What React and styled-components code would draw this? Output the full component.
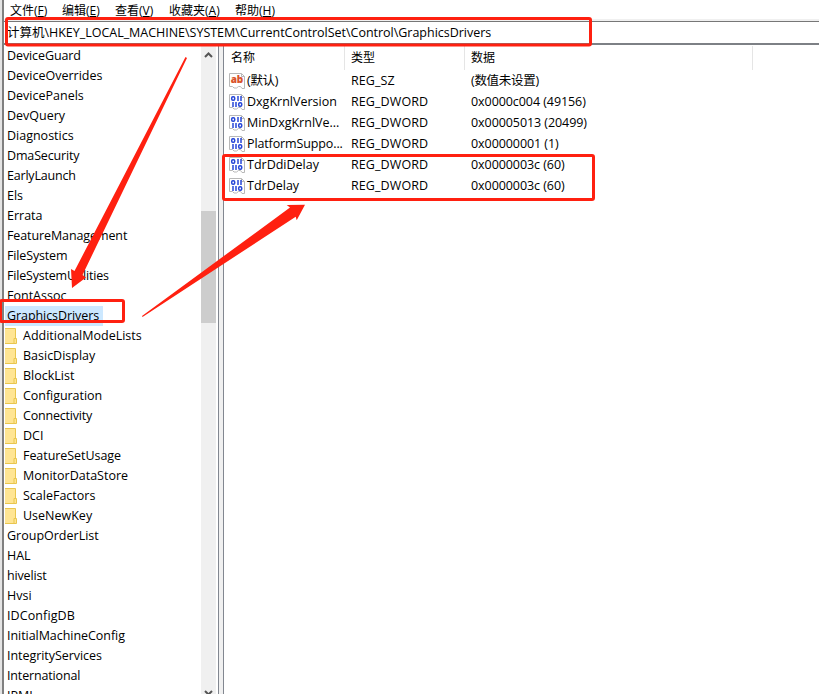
import React from "react";
import styled, { createGlobalStyle, css } from "styled-components";

const RED = "#ff2010";

const GlobalStyle = createGlobalStyle`
  * {
    box-sizing: border-box;
  }
  body {
    margin: 0;
    overflow: hidden;
    background: #fff;
    color: #000;
    font: 12.5px/20px "Open Sans", "Noto Sans CJK SC", sans-serif;
  }
`;

const Window = styled.div`
  position: relative;
  display: flex;
  width: 819px;
  height: 694px;
  overflow: hidden;
`;

const LeftEdge = styled.div`
  flex: none;
  width: 4px;
  background: #e4e4e4;
  border-right: 2px solid #808080;
`;

const Main = styled.div`
  flex: 1;
  min-width: 0;
  display: flex;
  flex-direction: column;
`;

const MenuBar = styled.nav`
  display: flex;
  height: 21px;
  padding-left: 6px;
  border-bottom: 2px solid #f0f0f0;
`;

const MenuItem = styled.span`
  flex: none;
  width: ${props => props.$width}px;
  font-size: 12px;
  line-height: 22px;
  white-space: nowrap;
`;

const AddressBar = styled.div`
  height: 24px;
  padding-left: 3px;
  border-top: 1px solid #777;
  border-bottom: 2px solid #7d8085;
  line-height: 22px;
  letter-spacing: -0.02px;
  white-space: nowrap;
`;

const Panes = styled.div`
  flex: 1;
  min-height: 0;
  display: flex;
`;

const TreePane = styled.div`
  flex: none;
  width: 197px;
  padding-top: 1px;
  overflow: hidden;
`;

const TreeRow = styled.div`
  display: flex;
  align-items: center;
  height: 20px;
  padding-left: ${props => (props.$child ? 1 : 0)}px;
`;

const TreeLabel = styled.span`
  height: 20px;
  padding: 0 4px 0 ${props => (props.$child ? 6 : 3)}px;
  line-height: 19px;
  letter-spacing: ${props => props.$spacing || 0}px;
  white-space: nowrap;
  ${props =>
    props.$selected &&
    css`
      margin-left: 1px;
      padding-left: 2px;
      background: #cce8ff;
    `}
`;

const ScrollTrack = styled.div`
  flex: none;
  width: 15px;
  height: 100%;
  display: flex;
  flex-direction: column;
  background: #f0f0f0;
`;

const ScrollArrow = styled.svg`
  flex: none;
  display: block;
  width: 15px;
  height: 17px;
  fill: none;
  stroke: #555;
  stroke-width: 2;
`;

const ScrollGap = styled.div`
  height: ${props => props.$height}px;
  ${props => props.$fill && "flex: 1;"}
`;

const ScrollThumb = styled.div`
  height: 112px;
  background: #cdcdcd;
`;

const Splitter = styled.div`
  flex: none;
  width: 6px;
  margin-left: 2px;
  background: #f0f0f0;
  border-left: 1px solid #828790;
  border-right: 1px solid #828790;
`;

const ValuePane = styled.div`
  flex: 1;
  padding-top: 1px;
`;

const COLUMNS = "121px 120px 288px";

const HeaderRow = styled.div`
  display: grid;
  grid-template-columns: ${COLUMNS};
  height: 24px;
`;

const HeaderCell = styled.div`
  padding-left: ${props => (props.$first ? 7 : 6)}px;
  border-right: 1px solid #e5e5e5;
  font-size: 12px;
  line-height: 23px;
`;

const ValueRow = styled.div`
  display: grid;
  grid-template-columns: ${COLUMNS};
  height: 21px;
  line-height: 21px;
  white-space: nowrap;
`;

const NameCell = styled.div`
  display: flex;
  align-items: center;
  gap: 2px;
  padding-left: 5px;
  letter-spacing: ${props => props.$spacing || 0}px;
`;

const Cell = styled.div`
  padding-left: 6px;
  letter-spacing: ${props => props.$spacing || 0}px;
`;

const Icon = styled.svg`
  flex: none;
  display: block;
`;

const Marks = styled.svg`
  position: absolute;
  top: 0;
  left: 0;
  pointer-events: none;
`;

const menus = [
  ["文件", "F", 52],
  ["编辑", "E", 53],
  ["查看", "V", 54],
  ["收藏夹", "A", 66],
  ["帮助", "H", 50],
];

const tree = [
  { label: "DeviceGuard", spacing: -0.1 },
  { label: "DeviceOverrides" },
  { label: "DevicePanels" },
  { label: "DevQuery" },
  { label: "Diagnostics" },
  { label: "DmaSecurity", spacing: -0.15 },
  { label: "EarlyLaunch", spacing: -0.2 },
  { label: "Els" },
  { label: "Errata" },
  { label: "FeatureManagement", spacing: -0.1 },
  { label: "FileSystem", spacing: -0.15 },
  { label: "FileSystemUtilities", spacing: -0.2 },
  { label: "FontAssoc" },
  { label: "GraphicsDrivers", spacing: -0.07, selected: true },
  { label: "AdditionalModeLists", child: true },
  { label: "BasicDisplay", child: true },
  { label: "BlockList", child: true },
  { label: "Configuration", spacing: -0.05, child: true },
  { label: "Connectivity", spacing: -0.2, child: true },
  { label: "DCI", child: true },
  { label: "FeatureSetUsage", spacing: -0.05, child: true },
  { label: "MonitorDataStore", child: true },
  { label: "ScaleFactors", child: true },
  { label: "UseNewKey", child: true },
  { label: "GroupOrderList" },
  { label: "HAL" },
  { label: "hivelist", spacing: -0.15 },
  { label: "Hvsi" },
  { label: "IDConfigDB", spacing: 0.1 },
  { label: "InitialMachineConfig", spacing: -0.05 },
  { label: "IntegrityServices", spacing: -0.05 },
  { label: "International", spacing: -0.15 },
  { label: "IPMI" },
];

const values = [
  { name: "(默认)", type: "REG_SZ", data: "(数值未设置)", spacing: -0.3, dataSpacing: -0.3 },
  { name: "DxgKrnlVersion", type: "REG_DWORD", data: "0x0000c004 (49156)" },
  { name: "MinDxgKrnlVe...", type: "REG_DWORD", data: "0x00005013 (20499)" },
  { name: "PlatformSuppo...", type: "REG_DWORD", data: "0x00000001 (1)", spacing: -0.12 },
  { name: "TdrDdiDelay", type: "REG_DWORD", data: "0x0000003c (60)" },
  { name: "TdrDelay", type: "REG_DWORD", data: "0x0000003c (60)" },
];

const FolderIcon = () => (
  <Icon width="12" height="18" viewBox="0 0 12 18">
    <path d="M0 1.5H10.5V11.5H11.5V16.5H0Z" fill="#ffe594" />
    <path d="M0 1.5H10.5V11M0 16.5H11.5V11.5H9V16" fill="none" stroke="#e9c64f" />
  </Icon>
);

const ValueIcon = ({ text }) => (
  <Icon width="16" height="16" viewBox="0 0 16 16">
    <path
      d="M.5.5H12.5L15.5 3.5V15.5H13L11.5 13.5H9.5L7.5 15H5L3.5 13.5H.5Z"
      fill="#fff"
      stroke="#b8b8b8"
    />
    <path d="M12.5.5V3.5H15.5" fill="none" stroke="#b8b8b8" />
    {text ? (
      <text x="1.8" y="10" fill="#d9532c" fontSize="10" fontWeight="800" fontFamily="Open Sans">
        ab
      </text>
    ) : (
      <g fill="none" stroke="#2747d8" strokeWidth="1.5">
        <rect x="2.7" y="2.7" width="3" height="3.6" rx="1.2" />
        <path d="M9 2V7M12 2V7M4 8V13M7 8V13" />
        <rect x="9.7" y="8.7" width="3" height="3.6" rx="1.2" />
      </g>
    )}
  </Icon>
);

const App = () => {
  return (
    <Window>
      <GlobalStyle />
      <LeftEdge />
      <Main>
        <MenuBar>
          {menus.map(([label, key, width]) => (
            <MenuItem key={key} $width={width}>
              {label}(<u>{key}</u>)
            </MenuItem>
          ))}
        </MenuBar>
        <AddressBar>
          计算机\HKEY_LOCAL_MACHINE\SYSTEM\CurrentControlSet\Control\GraphicsDrivers
        </AddressBar>
        <Panes>
          <TreePane>
            {tree.map(({ label, spacing, child, selected }) => (
              <TreeRow key={label} $child={child}>
                {child && <FolderIcon />}
                <TreeLabel $child={child} $selected={selected} $spacing={spacing}>
                  {label}
                </TreeLabel>
              </TreeRow>
            ))}
          </TreePane>
          <ScrollTrack>
            <ScrollArrow viewBox="0 0 15 17">
              <path d="M4 12L7.5 8.5L11 12" />
            </ScrollArrow>
            <ScrollGap $height={149} />
            <ScrollThumb />
            <ScrollGap $fill />
            <ScrollArrow viewBox="0 0 15 17">
              <path d="M4 14L7.5 17.5L11 14" />
            </ScrollArrow>
          </ScrollTrack>
          <Splitter />
          <ValuePane>
            <HeaderRow>
              <HeaderCell $first>名称</HeaderCell>
              <HeaderCell>类型</HeaderCell>
              <HeaderCell>数据</HeaderCell>
            </HeaderRow>
            {values.map((value, i) => (
              <ValueRow key={value.name}>
                <NameCell $spacing={value.spacing}>
                  <ValueIcon text={i === 0} />
                  {value.name}
                </NameCell>
                <Cell $spacing={0.1}>{value.type}</Cell>
                <Cell $spacing={value.dataSpacing || -0.07}>{value.data}</Cell>
              </ValueRow>
            ))}
          </ValuePane>
        </Panes>
      </Main>
      {/* highlight boxes and arrows drawn over the window */}
      <Marks width="819" height="694" viewBox="0 0 819 694">
        <g fill="none" stroke={RED} strokeWidth="3">
          <rect x="6.5" y="18.5" width="584" height="26.5" rx="1.5" />
          <rect x="0.5" y="300.5" width="123" height="21" rx="1.5" />
          <rect x="223.5" y="155.5" width="370" height="44" rx="1.5" />
        </g>
        <g fill={RED}>
          <path d="M185.5 57L187 58L109 220L82.5 275L86 277.5L72 288L71 269L74.5 271L101 220Z" />
          <path d="M142 316L290 207.5L286.7 205L305 204.7L296.7 220.3L295.7 216.7L142.5 317Z" />
        </g>
      </Marks>
    </Window>
  );
};

export default App;
